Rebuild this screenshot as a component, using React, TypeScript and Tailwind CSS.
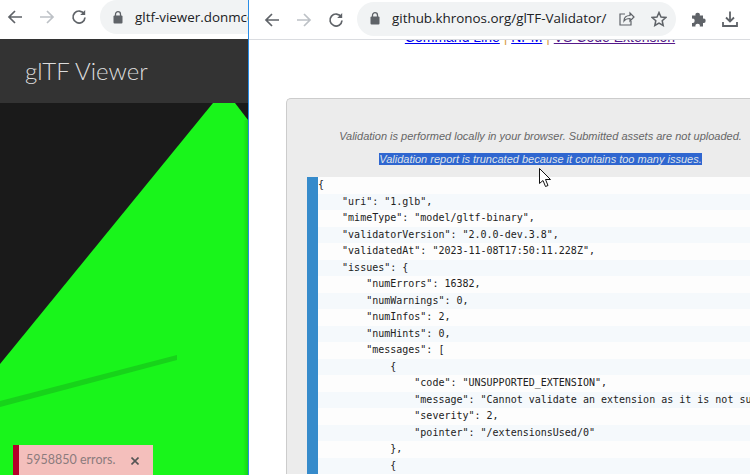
import type { ReactNode } from "react";

const reportLines = [
  "{",
  '    "uri": "1.glb",',
  '    "mimeType": "model/gltf-binary",',
  '    "validatorVersion": "2.0.0-dev.3.8",',
  '    "validatedAt": "2023-11-08T17:50:11.228Z",',
  '    "issues": {',
  '        "numErrors": 16382,',
  '        "numWarnings": 0,',
  '        "numInfos": 2,',
  '        "numHints": 0,',
  '        "messages": [',
  "            {",
  '                "code": "UNSUPPORTED_EXTENSION",',
  '                "message": "Cannot validate an extension as it is not supported by the validator.",',
  '                "severity": 2,',
  '                "pointer": "/extensionsUsed/0"',
  "            },",
  "            {",
];

function NavIcons() {
  return (
    <div className="flex items-center gap-[16px] shrink-0 text-[#5f6368]">
      <svg width="16" height="16" viewBox="0 0 16 16" fill="none" stroke="currentColor" strokeWidth="1.7">
        <path d="M15 8H2M8 2L2 8l6 6" />
      </svg>
      <svg width="16" height="16" viewBox="0 0 16 16" fill="none" stroke="#bdc1c6" strokeWidth="1.7">
        <path d="M1 8h13M8 2l6 6-6 6" />
      </svg>
      <svg width="16" height="16" viewBox="0 0 16 16" fill="none" stroke="currentColor" strokeWidth="1.7">
        <path d="M13.2 5A6 6 0 1 0 14 8.5" />
        <path d="M14.2 1v5h-5" fill="currentColor" stroke="none" />
      </svg>
    </div>
  );
}

function Lock() {
  return (
    <svg width="10" height="13" viewBox="0 0 10 13" className="shrink-0 text-[#5f6368]" fill="none">
      <rect x="0.5" y="4.5" width="9" height="8" rx="1" fill="currentColor" />
      <path d="M2.5 5V3.2a2.5 2.5 0 0 1 5 0V5" stroke="currentColor" strokeWidth="1.3" />
    </svg>
  );
}

function Omnibox({ className, children }: { className: string; children: ReactNode }) {
  return (
    <div className={`flex items-center h-[34px] rounded-[17px] bg-[#f1f3f4] pl-[13px] gap-[12px] overflow-hidden ${className}`}>
      <Lock />
      {children}
    </div>
  );
}

function GltfScene() {
  return (
    <svg className="block w-full flex-1" viewBox="0 0 248 372" preserveAspectRatio="none">
      <defs>
        <linearGradient id="edge" x1="0" x2="1" y1="0" y2="0">
          <stop offset="0" stopColor="#000" stopOpacity="0" />
          <stop offset="1" stopColor="#000" stopOpacity="0.14" />
        </linearGradient>
      </defs>
      <rect width="248" height="372" fill="#1a1a1a" />
      <path d="M213 0H235L248 17V372H0V261Z" fill="#19f51b" />
      <path d="M177 252L0 298V304L177 257Z" fill="#17d31a" />
      <path d="M243 17L248 17V372H243Z" fill="url(#edge)" />
    </svg>
  );
}

export default function App() {
  return (
    <div className="w-[750px] h-[475px] flex overflow-hidden bg-white font-['Liberation_Sans',sans-serif]">
      {/* viewer window */}
      <div className="relative w-[249px] shrink-0 flex flex-col border-r border-[#2a8de6]">
        <div className="h-[39px] shrink-0 flex items-center pl-[7px] gap-[13px] bg-white pb-[5px]">
          <NavIcons />
          <Omnibox className="flex-1 min-w-0 rounded-r-none">
            <span className="whitespace-nowrap text-[13.4px] text-[#202124] font-['Open_Sans',sans-serif]">
              gltf-viewer.donmccurdy.com
            </span>
          </Omnibox>
        </div>
        <div className="h-[64px] shrink-0 flex items-center pl-[25px] bg-[#333333]">
          <span className="text-[24px] font-light text-[#dcdcdc] font-['Lato',sans-serif]">glTF Viewer</span>
        </div>
        <GltfScene />
        <div className="absolute left-[13px] bottom-0 w-[140px] h-[30px] flex items-center bg-[#f4bfbc] border-l-[6px] border-[#b5002a] pl-[7px]">
          <span className="text-[12.5px] text-[#8b7b7d] font-['Lato',sans-serif]">5958850 errors.</span>
          <svg width="8" height="8" viewBox="0 0 8 8" className="ml-[16px] mt-[2px]" stroke="#555" strokeWidth="1.6">
            <path d="M0.5 0.5l7 7M7.5 0.5l-7 7" />
          </svg>
        </div>
      </div>

      {/* validator window */}
      <div className="relative flex-1 min-w-0 flex flex-col overflow-hidden">
        <div className="relative z-10 h-[40px] shrink-0 flex items-center pl-[15px] bg-white border-b border-[#dadce0]">
          <NavIcons />
          <Omnibox className="ml-[13px] w-[319px] mb-[2px] pr-[11px]">
            <span className="whitespace-nowrap text-[13.4px] text-[#202124] font-['Open_Sans',sans-serif] flex-1">
              github.khronos.org/glTF-Validator/
            </span>
            <svg width="16" height="15" viewBox="0 0 16 15" fill="none" stroke="#5f6368" strokeWidth="1.2" className="shrink-0">
              <path d="M6 3H1v11h11v-4" />
              <path d="M5 10c0-4 3-5.5 6-5.5V2l4 4-4 4V7.5c-3 0-5 1-6 2.5z" />
            </svg>
            <svg width="16" height="16" viewBox="0 0 16 16" fill="none" stroke="#5f6368" strokeWidth="1.5" className="shrink-0 ml-[4px] mr-px">
              <path d="M8 1.5l2 4.5 4.8.5-3.6 3.2 1 4.8L8 12l-4.2 2.5 1-4.8L1.200 6.500 6 6z" />
            </svg>
          </Omnibox>
          <svg width="16" height="16" viewBox="0 0 16 16" fill="#5f6368" className="ml-[15px] mb-[2px] shrink-0">
            <path d="M1 4.500h3.500a2.200 2.200 0 1 1 4.300 0H12v3.200a2.200 2.200 0 1 1 0 4.300V15.500H8.800a2.200 2.200 0 1 0-4.300 0H1v-3.500a2.200 2.200 0 1 0 0-4.300z" />
          </svg>
          <svg width="16" height="16" viewBox="0 0 16 16" fill="none" stroke="#5f6368" strokeWidth="1.8" className="ml-[15px] mb-[2px] shrink-0">
            <path d="M8 0.500v9.500M4 6.500l4 4 4-4M1 11v4h14v-4" />
          </svg>
        </div>

        <div className="flex-1 min-h-0 overflow-hidden pl-[37px]">
          <div className="w-[508px] -mt-[11px] text-center text-[14px] leading-[16px] text-[#d9a04b]">
            <span className="underline text-[#0000ee]">Command Line</span>
            <span> | </span>
            <span className="underline text-[#0000ee]">NPM</span>
            <span> | </span>
            <span className="underline text-[#551a8b]">VS Code Extension</span>
          </div>
          <div className="w-[508px] mt-[53px] pt-[31px] border-t border-l border-[#cccccc] rounded-tl-[5px] bg-[#ececec]">
            <p className="text-center text-[11px] leading-[13px] italic text-[#666666]">
              Validation is performed locally in your browser. Submitted assets are not uploaded.
            </p>
            <p className="text-center text-[11px] leading-[13px] italic mt-[10px]">
              <span className="bg-[#2f66d0] text-[#dfe3ea]">
                Validation report is truncated because it contains too many issues.
              </span>
            </p>
            <div className="ml-[20px] mt-[11px] w-[520px] flex border-l-[11px] border-[#368bcb] border-t-0">
              <div className="flex-1 min-w-0 overflow-hidden font-['DejaVu_Sans_Mono',monospace] text-[10px] text-[#222222]">
                {reportLines.map((line, i) => (
                  <div
                    key={i}
                    className={`h-[16.5px] leading-[16.5px] whitespace-pre ${i % 2 === 0 ? "bg-[#fdfdfd]" : "bg-[#f5f9fc]"}`}
                  >
                    {line}
                  </div>
                ))}
              </div>
            </div>
          </div>
        </div>

        {/* mouse pointer */}
        <svg width="14" height="20" viewBox="0 0 14 20" className="absolute left-[290px] top-[168px]" fill="#fff" stroke="#111" strokeWidth="1">
          <path d="M0.500 0.500V15.500L4 12.500L6.500 18.500L9 17.500L6.500 11.500H11.500Z" />
        </svg>
      </div>
    </div>
  );
}
